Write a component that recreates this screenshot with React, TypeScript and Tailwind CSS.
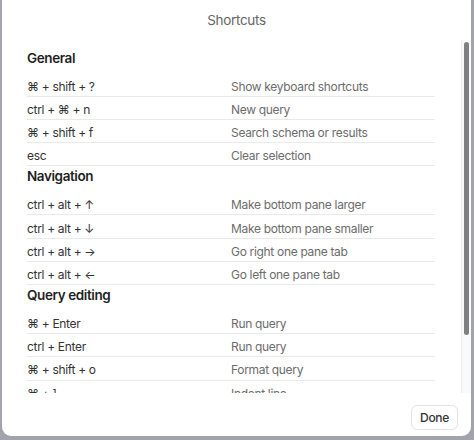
const sections = [
  {
    title: "General",
    rows: [
      ["⌘ + shift + ?", "Show keyboard shortcuts"],
      ["ctrl + ⌘ + n", "New query"],
      ["⌘ + shift + f", "Search schema or results"],
      ["esc", "Clear selection"],
    ],
  },
  {
    title: "Navigation",
    rows: [
      ["ctrl + alt + ↑", "Make bottom pane larger"],
      ["ctrl + alt + ↓", "Make bottom pane smaller"],
      ["ctrl + alt + →", "Go right one pane tab"],
      ["ctrl + alt + ←", "Go left one pane tab"],
    ],
  },
  {
    title: "Query editing",
    rows: [
      ["⌘ + Enter", "Run query"],
      ["ctrl + Enter", "Run query"],
      ["⌘ + shift + o", "Format query"],
      ["⌘ + ]", "Indent line"],
      ["⌘ + [", "Outdent line"],
    ],
  },
];

/** Keyboard shortcuts dialog */
export default function App() {
  return (
    <div
      className="h-[440px] w-[474px] overflow-hidden bg-[#a3a3ab] pl-[2px] pr-[3px] tracking-[-0.02em]"
      style={{ fontFamily: "Inter, 'Noto Sans', sans-serif" }}
    >
      <div className="flex h-[436px] flex-col rounded-b-[9px] bg-white">
        {/* Header */}
        <div className="flex h-[40px] shrink-0 items-center justify-center text-[13.5px] text-[#666]">
          Shortcuts
        </div>

        {/* Scroll area */}
        <div className="flex h-[353px] shrink-0">
          <div className="flex-1 overflow-hidden pl-[25px] pr-[26px] pt-[7.5px]">
            {sections.map((section) => (
              <div key={section.title}>
                <h2 className="mb-[6px] h-[20px] text-[13.5px] font-semibold leading-[20px] tracking-[-0.03em] text-[#1f1f1f]">
                  {section.title}
                </h2>
                {section.rows.map(([keys, label]) => (
                  <div
                    key={keys}
                    className="grid h-[23.2px] grid-cols-2 items-center border-b border-[#e9e9e9] pt-[4px] text-[12px]"
                  >
                    <span className="text-[#333]">{keys}</span>
                    <span className="text-[#6c6c6c]">{label}</span>
                  </div>
                ))}
              </div>
            ))}
          </div>
          {/* Scrollbar */}
          <div className="flex w-[10px] shrink-0 justify-center border-l border-[#ececec] bg-[#fafafa] pt-[2px]">
            <div className="h-[293px] w-[5px] rounded-full bg-[#808080]" />
          </div>
        </div>

        {/* Footer */}
        <div className="flex flex-1 items-start justify-end pr-[13px] pt-[12px]">
          <button className="h-[25px] w-[47px] rounded-[6px] border border-[#e3e3e3] bg-white text-[12px] font-medium text-[#333]">
            Done
          </button>
        </div>
      </div>
    </div>
  );
}
